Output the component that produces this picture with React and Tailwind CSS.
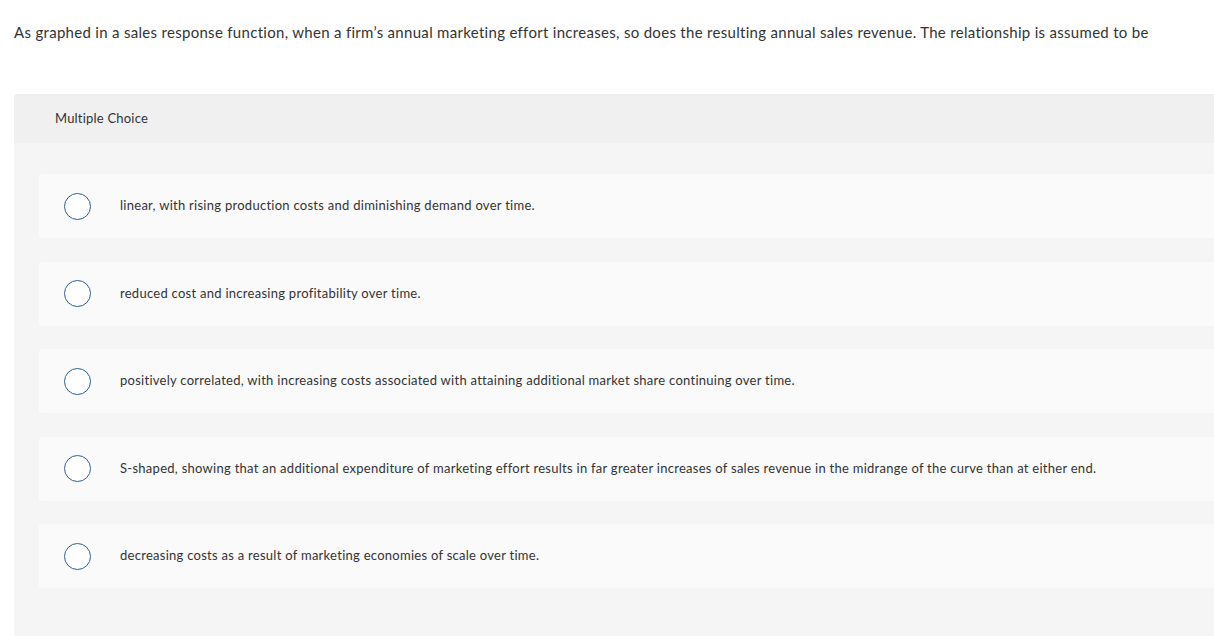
import React from 'react';

const options = [
  'linear, with rising production costs and diminishing demand over time.',
  'reduced cost and increasing profitability over time.',
  'positively correlated, with increasing costs associated with attaining additional market share continuing over time.',
  'S-shaped, showing that an additional expenditure of marketing effort results in far greater increases of sales revenue in the midrange of the curve than at either end.',
  'decreasing costs as a result of marketing economies of scale over time.',
];

const App = () => {
  return (
    <div className="w-[1214px] h-[636px] overflow-hidden bg-white text-[#333] font-['Lato','Open_Sans',sans-serif] [font-variant-ligatures:none]">
      <p className="pl-[14px] pt-[22px] text-[15px] leading-[20px] tracking-[0.3px] text-[#333]">
        As graphed in a sales response function, when a firm’s annual marketing effort increases, so does the resulting annual sales revenue. The relationship is assumed to be
      </p>

      <div className="ml-[14px] mt-[52px] bg-[#f5f5f5] rounded-tl-[3px] h-[600px]">
        <div className="h-[49px] bg-[#f0f0f0] rounded-tl-[3px] flex items-center pl-[41px] text-[13px] tracking-[0.2px]">
          Multiple Choice
        </div>
        <div className="pt-[31px] pl-[25px] flex flex-col gap-[23.5px]">
          {options.map((text, i) => (
            <div key={i} className="h-[64px] bg-[#fafafa] rounded-l-[3px] flex items-center">
              <span className="ml-[25px] w-[27px] h-[27px] rounded-full border-[1.5px] border-[#2d5f93] bg-white shrink-0" />
              <span className="ml-[29px] text-[13px] tracking-[0.27px] text-[#333]">{text}</span>
            </div>
          ))}
        </div>
      </div>
    </div>
  );
};

export default App;
